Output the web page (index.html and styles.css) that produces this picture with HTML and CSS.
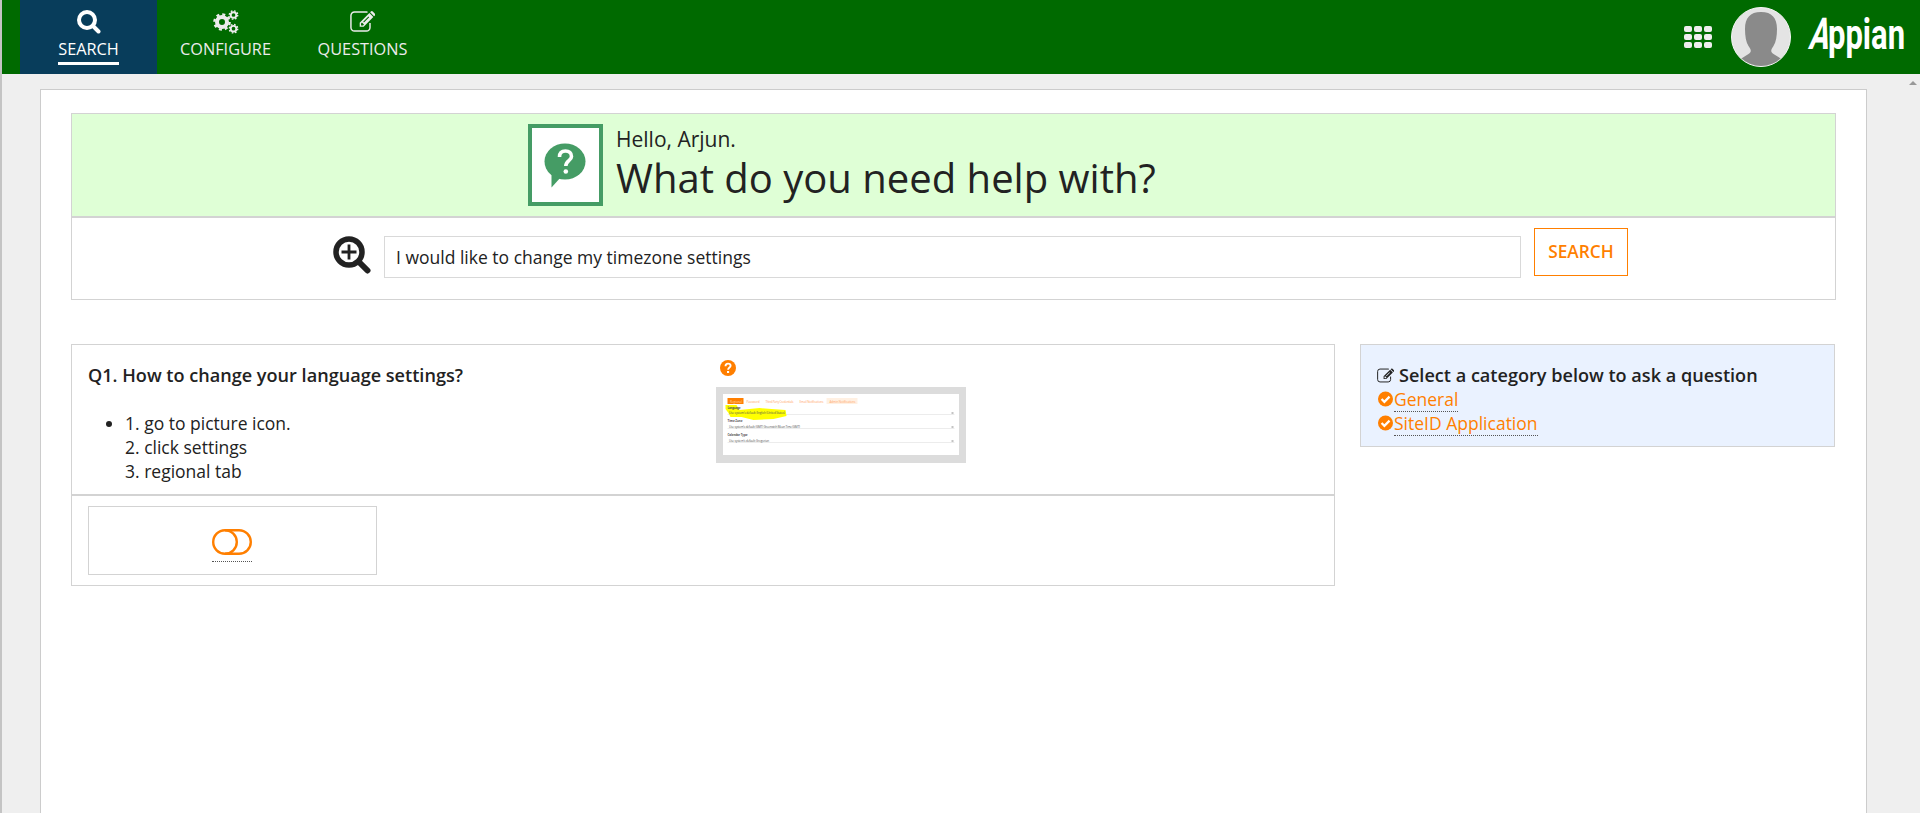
FILE: index.html
```html
<!DOCTYPE html>
<html lang="en">
<head>
    <meta charset="UTF-8">
    <meta name="viewport" content="width=device-width, initial-scale=1.0">
    <title>Search</title>
    <link rel="stylesheet" href="styles.css">
</head>
<body>
    <svg class="sprite" width="0" height="0">
        <symbol id="icon-edit" viewBox="0 0 24 20">
            <path d="M19.2 11.5v4.2a3.4 3.4 0 0 1-3.4 3.4H4.3a3.4 3.4 0 0 1-3.4-3.4V4.3A3.4 3.4 0 0 1 4.3.9h11.5l1 .2" fill="none" stroke="currentColor" stroke-width="1.4"/>
            <path fill-rule="evenodd" d="M9.3 11.2 18.6 1.9l3.8 3.8-9.3 9.3H9.3zM10.6 11.9v1.9h1.9l.9-.9-1.9-1.9zM12.7 10.3l.7.7 5-5-.7-.7zM19.3 1.2l.7-.7a1.3 1.3 0 0 1 1.9 0l2 2a1.3 1.3 0 0 1 0 1.8l-.8.7z" fill="currentColor"/>
        </symbol>
        <symbol id="icon-check" viewBox="0 0 16 16">
            <circle cx="8" cy="8" r="8" fill="currentColor"/>
            <path d="M3.8 8l3 3 5.5-5.5" fill="none" stroke="#fff" stroke-width="2.4"/>
        </symbol>
    </svg>

    <header class="topbar">
        <nav class="tabs">
            <a class="tab active">
                <svg class="tab-icon" viewBox="0 0 24 24"><circle cx="10" cy="10" r="8" fill="none" stroke="currentColor" stroke-width="4"/><path d="M16 16l5.5 5.5" stroke="currentColor" stroke-width="4" stroke-linecap="round"/></svg>
                <span class="tab-label">SEARCH</span>
            </a>
            <a class="tab">
                <svg class="tab-icon gears" viewBox="0 0 26 24">
                    <g fill="none" stroke="currentColor">
                        <circle cx="9" cy="12" r="5" stroke-width="4"/>
                        <circle cx="9" cy="12" r="7.6" stroke-width="2.4" stroke-dasharray="3 2.97"/>
                        <circle cx="20.5" cy="5" r="2.8" stroke-width="1.9"/>
                        <circle cx="20.5" cy="5" r="4.2" stroke-width="1.4" stroke-dasharray="1.65 1.65"/>
                        <circle cx="20.5" cy="18.7" r="2.8" stroke-width="1.9"/>
                        <circle cx="20.5" cy="18.7" r="4.2" stroke-width="1.4" stroke-dasharray="1.65 1.65"/>
                    </g>
                </svg>
                <span class="tab-label">CONFIGURE</span>
            </a>
            <a class="tab">
                <svg class="tab-icon pencil"><use href="#icon-edit"/></svg>
                <span class="tab-label">QUESTIONS</span>
            </a>
        </nav>
        <div class="tools">
            <div class="app-grid"><i></i><i></i><i></i><i></i><i></i><i></i><i></i><i></i><i></i></div>
            <svg class="avatar" viewBox="0 0 60 60">
                <defs><clipPath id="round"><circle cx="30" cy="30" r="29"/></clipPath></defs>
                <circle cx="30" cy="30" r="29.5" fill="#e4e4e4" stroke="#f5f5f5"/>
                <path clip-path="url(#round)" d="M30 5C19 5 14 11 14 22c0 7 1 13 3.500 17 3 4 3 6 0 8L8 53v7h44v-7l-9.500-6c-3-2-3-4 0-8C45 35 46 29 46 22 46 11 41 5 30 5z" fill="#8a8a8a"/>
            </svg>
            <svg class="logo" viewBox="0 0 100 64">
                <g fill="#fff">
                    <text class="logo-text" transform="skewX(-12)" x="10" y="44" font-size="44" textLength="20" lengthAdjust="spacingAndGlyphs">A</text>
                    <text class="logo-text" x="21" y="44" font-size="42" textLength="77" lengthAdjust="spacingAndGlyphs">ppian</text>
                </g>
            </svg>
        </div>
    </header>

    <div class="scroll-arrow"></div>

    <main class="page">
        <section class="box banner">
            <div class="help-icon">
                <svg viewBox="0 0 42 46"><ellipse cx="21" cy="18.500" rx="20.500" ry="18" fill="#459c65"/><path d="M7.500 28v16.500L17 34z" fill="#459c65"/><path d="M15.500 14c0-4 2.500-6 6-6s6 2 6 5.500c0 4.500-5.700 4-5.700 9.500" fill="none" stroke="#fff" stroke-width="3.600"/><circle cx="21.800" cy="28.500" r="2.300" fill="#fff"/></svg>
            </div>
            <div class="greeting">
                <div class="hello">Hello, Arjun.</div>
                <div class="headline">What do you need help with?</div>
            </div>
        </section>
        <section class="box search-row">
            <svg class="zoom-icon" viewBox="0 0 38 38"><g fill="none" stroke="#222"><circle cx="16" cy="16" r="13" stroke-width="5.500"/><path d="M27 27l7.500 7.500" stroke-width="6" stroke-linecap="round"/><path d="M16 8.500v15M8.500 16h15" stroke-width="2.800"/></g></svg>
            <input class="search-input" type="text" value="I would like to change my timezone settings">
            <button class="search-btn">SEARCH</button>
        </section>

        <div class="columns">
            <div class="results">
                <section class="box answer">
                    <div class="answer-text">
                        <div class="question">Q1. How to change your language settings?</div>
                        <ul class="steps">
                            <li>1. go to picture icon.<br>2. click settings<br>3. regional tab</li>
                        </ul>
                    </div>
                    <div class="answer-media">
                        <svg class="help-dot" viewBox="0 0 16 16"><circle cx="8" cy="8" r="8" fill="#ff7f00"/><path d="M5.500 6.200C5.500 4.500 6.500 3.600 8 3.600s2.600.9 2.600 2.200c0 1.700-2.500 1.800-2.500 3.900" fill="none" stroke="#fff" stroke-width="1.900"/><path d="M7 11h2.100v2H7z" fill="#fff"/></svg>
                        <div class="thumb">
                            <svg viewBox="0 0 235 61">
                                <g class="thumb-text">
                                    <path d="M4 4h16v6H4z" fill="#ff7f00"/>
                                    <path d="M103 4h31v6h-31z" fill="#fff0e2"/>
                                    <g fill="#ffa868">
                                        <text x="6.500" y="8.600" fill="#ffd5a8" textLength="12">Regional</text>
                                        <text x="23" y="8.600" textLength="13">Password</text>
                                        <text x="42" y="8.600" textLength="28">Third-Party Credentials</text>
                                        <text x="76" y="8.600" textLength="24">Email Notifications</text>
                                        <text x="106" y="8.600" textLength="26">Admin Notifications</text>
                                    </g>
                                    <path d="M4 18.500h227M4 32.500h227M4 46.500h227" transform="translate(0 2)" stroke="#ececec" stroke-width="1"/>
                                    <path d="M2 11h11l3 5 20-2 12 1 14 1 1 6-13 3-20 1-12-3-11 0-2-4-3-4z" fill="#ff0"/>
                                    <g fill="#555">
                                        <text x="4" y="14.800" font-weight="700" textLength="13">Language</text>
                                        <text x="5.500" y="20.300" textLength="56">Use system's default: English (United States)</text>
                                        <text x="4" y="28.400" font-weight="700" textLength="15">Time Zone</text>
                                        <text x="5.500" y="34" textLength="71">Use system's default: (GMT) Greenwich Mean Time (GMT)</text>
                                        <text x="4" y="42.200" font-weight="700" textLength="20">Calendar Type</text>
                                        <text x="5.500" y="48" textLength="40">Use system's default: Gregorian</text>
                                    </g>
                                    <path d="M228 19h2M228 33h2M228 47h2" stroke="#888"/>
                                </g>
                            </svg>
                        </div>
                    </div>
                </section>
                <section class="box feedback">
                    <div class="toggle-box">
                        <a class="toggle"><svg viewBox="0 0 40 26"><g fill="none" stroke="#ff7f00" stroke-width="2.400"><rect x="1.200" y="1.200" width="37.600" height="23.600" rx="11.800"/><path d="M13 1.200a11.800 11.800 0 0 1 0 23.600"/></g></svg></a>
                    </div>
                </section>
            </div>
            <aside class="box categories">
                <div class="categories-title"><svg class="edit-icon"><use href="#icon-edit"/></svg>Select a category below to ask a question</div>
                <div class="category"><svg class="check-icon"><use href="#icon-check"/></svg><a>General</a></div>
                <div class="category"><svg class="check-icon"><use href="#icon-check"/></svg><a>SiteID Application</a></div>
            </aside>
        </div>
    </main>
</body>
</html>
```
FILE: styles.css
```css
* { box-sizing: border-box; }
body { margin: 0; height: 813px; overflow: hidden; border-left: 2px solid #c4c4c4; background-color: #efefef; color: #222; font-family: "Open Sans", sans-serif; font-size: 17.5px; line-height: 24px; }
svg { display: block; }
.sprite { position: absolute; }

.topbar { display: flex; justify-content: space-between; height: 74px; background-color: #006a00; color: #ececec; }
.tabs { display: flex; padding-left: 18px; }
.tab { display: flex; flex-direction: column; align-items: center; width: 137px; padding-top: 10px; font-size: 16.3px; }
.tab.active { background-color: #083d5b; color: #fff; }
.tab-icon { width: 24px; height: 24px; }
.tab-icon.gears { width: 26px; }
.tab-icon.pencil { width: 25px; height: 21px; margin: 1px 0 2px; }
.tab-label { margin-top: 3px; height: 28px; }
.active .tab-label { border-bottom: 3px solid #fff; }
.tools { display: flex; align-items: center; padding-right: 13px; }
.app-grid { display: grid; grid-template-columns: repeat(3, 8px); grid-auto-rows: 6px; gap: 2px; margin-right: 19px; }
.app-grid i { background-color: #eee; border-radius: 2px; }
.avatar { width: 60px; height: 60px; margin-right: 16px; }
.logo { width: 100px; height: 64px; overflow: visible; }
.logo-text { font-family: "Liberation Sans Narrow", "Roboto", sans-serif; font-weight: 700; }

.scroll-arrow { position: absolute; right: 3px; top: 81px; border: 4px solid transparent; border-top: 0; border-bottom-color: #999; }

.page { width: 1827px; height: 760px; margin: 15px 0 0 38px; padding: 23px 30px 0; border: 1px solid #ccc; background-color: #fff; }
.box { border: 1px solid #d3d3d3; background-color: #fff; }

.banner { display: flex; height: 104px; padding: 10px 0 0 456px; background-color: #dfffd6; }
.help-icon { display: flex; justify-content: center; width: 75px; height: 82px; padding-top: 15px; border: 4px solid #459c65; background-color: #fff; }
.help-icon svg { width: 42px; height: 46px; margin-right: 2px; }
.greeting { margin-left: 13px; }
.hello { font-size: 21px; line-height: 30px; }
.headline { font-size: 40px; line-height: 47px; }

.search-row { display: flex; height: 83px; padding: 10px 0 0 261px; }
.zoom-icon { width: 38px; height: 38px; margin: 8px 13px 0 0; }
.search-input { width: 1137px; height: 42px; margin: 8px 13px 0 0; padding: 0 11px; border: 1px solid #d9d9d9; color: #222; font: inherit; }
.search-btn { width: 94px; height: 48px; padding: 0; border: 1px solid #ff7f00; background-color: #fff; color: #ff7f00; font: inherit; font-weight: 600; font-size: 17.3px; }

.columns { display: flex; align-items: flex-start; justify-content: space-between; margin-top: 44px; padding-right: 1px; }
.results { width: 1264px; }
.answer { display: flex; height: 151px; padding: 15px 16px 0; }
.answer-text { width: 628px; }
.question { padding-top: 3px; font-size: 18.1px; font-weight: 600; }
.steps { margin: 24px 0 0; padding-left: 37px; }
.help-dot { width: 16px; height: 16px; margin-left: 4px; }
.thumb { width: 250px; height: 76px; margin-top: 11px; padding: 7px; background-color: #dcdcdc; }
.thumb svg { width: 236px; height: 61px; background-color: #fff; }
.thumb-text { font-size: 3px; }
.feedback { height: 91px; padding: 10px 16px; }
.toggle-box { display: flex; justify-content: center; width: 289px; height: 69px; padding: 22px 2px 0 0; border: 1px solid #d3d3d3; }
.toggle { width: 40px; height: 33px; border-bottom: 1px dotted #555; }
.toggle svg { width: 40px; height: 26px; }

.categories { width: 475px; height: 103px; padding: 18px 16px; background-color: #eaf2ff; }
.categories-title { display: flex; align-items: center; font-size: 18.1px; font-weight: 600; }
.edit-icon { width: 17px; height: 15px; margin-right: 5px; }
.category { display: flex; align-items: center; height: 24px; color: #ff7f00; }
.category a { border-bottom: 1px dotted #555; }
.check-icon { width: 15px; height: 16px; margin: 0 1px 0 1px; }
```
